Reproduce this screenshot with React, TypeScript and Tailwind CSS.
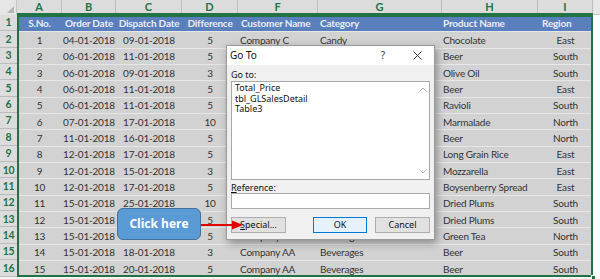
import React from 'react';

type Row = [string, string, string, string, string, string, string, string];

const letters = ['A', 'B', 'C', 'D', 'F', 'G', 'H', 'I'];

const headers: Row = [
  'S.No.',
  'Order Date',
  'Dispatch Date',
  'Difference',
  'Customer Name',
  'Category',
  'Product Name',
  'Region',
];

// cells hidden behind the dialog / callout are left blank
const rows: Row[] = [
  ['1', '04-01-2018', '09-01-2018', '5', 'Company C', 'Candy', 'Chocolate', 'East'],
  ['2', '06-01-2018', '11-01-2018', '5', '', '', 'Beer', 'South'],
  ['3', '06-01-2018', '09-01-2018', '3', '', '', 'Olive Oil', 'South'],
  ['4', '06-01-2018', '11-01-2018', '5', '', '', 'Beer', 'East'],
  ['5', '06-01-2018', '11-01-2018', '5', '', '', 'Ravioli', 'South'],
  ['6', '07-01-2018', '17-01-2018', '10', '', '', 'Marmalade', 'North'],
  ['7', '11-01-2018', '16-01-2018', '5', '', '', 'Beer', 'North'],
  ['8', '12-01-2018', '17-01-2018', '5', '', '', 'Long Grain Rice', 'East'],
  ['9', '12-01-2018', '15-01-2018', '3', '', '', 'Mozzarella', 'East'],
  ['10', '12-01-2018', '17-01-2018', '5', '', '', 'Boysenberry Spread', 'East'],
  ['11', '15-01-2018', '25-01-2018', '10', '', '', 'Dried Plums', 'South'],
  ['12', '15-01-2018', '', '5', '', '', 'Dried Plums', 'South'],
  ['13', '15-01-2018', '', '5', 'Company A', 'Beverages', 'Green Tea', 'North'],
  ['14', '15-01-2018', '18-01-2018', '3', 'Company AA', 'Beverages', 'Beer', 'South'],
  ['15', '15-01-2018', '20-01-2018', '5', 'Company AA', 'Beverages', 'Beer', 'South'],
];

// per-column alignment (data rows / header row)
const dataAlign = [
  'justify-center',
  'justify-center',
  'justify-center',
  'justify-center',
  'justify-start pl-[2px]',
  'justify-start pl-[2px]',
  'justify-start pl-[1px]',
  'justify-center',
];
const headAlign = [
  'justify-center',
  'justify-center',
  'justify-center',
  'justify-center',
  'justify-start pl-[3px]',
  'justify-start pl-[2px]',
  'justify-start pl-[1px]',
  'justify-start pl-[4px]',
];

const gridCols = 'grid grid-cols-[45px_54px_66px_56px_80px_124px_96px_55px]';

function ColumnLetters() {
  return (
    <div className="flex h-[15px] bg-[#e6e6e6]">
      <div className="relative w-[17px] border-r border-[#c8c8c8]">
        <div className="absolute right-[2px] bottom-[2px] w-0 h-0 border-l-[7px] border-l-transparent border-b-[7px] border-b-[#b5b5b5]" />
      </div>
      <div className={`${gridCols} w-[576px] border-b-2 border-[#217346] bg-[#dcdcdc]`}>
        {letters.map((l) => (
          <div
            key={l}
            className="flex items-center justify-center border-r border-[#bcbcbc] text-[11px] font-bold text-[#217346] leading-none"
          >
            {l}
          </div>
        ))}
      </div>
      <div className="flex-1 border-b border-[#c8c8c8]" />
    </div>
  );
}

function RowNumbers() {
  return (
    <div className="flex flex-col w-[17px] bg-[#dcdcdc]">
      {Array.from({ length: 16 }, (_, i) => (
        <div
          key={i}
          className="flex items-center justify-center h-[16.35px] border-b border-[#bcbcbc] text-[10.5px] font-bold text-[#217346] leading-none tracking-[-0.3px]"
        >
          {i + 1}
        </div>
      ))}
    </div>
  );
}

function Sheet() {
  return (
    <div className="relative w-[576px] after:absolute after:inset-0 after:border-2 after:border-[#217346] after:pointer-events-none">
      <div className={`${gridCols} h-[16.35px] bg-[#5a7fbd]`}>
        {headers.map((h, i) => (
          <div
            key={h}
            className={`flex items-center ${headAlign[i]} text-[10px] font-bold text-[#e8edf6] leading-none whitespace-nowrap tracking-[-0.2px]`}
          >
            {h}
          </div>
        ))}
      </div>
      {rows.map((r, ri) => (
        <div key={ri} className={`${gridCols} h-[16.35px] bg-[#d2d2d2] border-t border-[#e6e6e6]`}>
          {r.map((c, ci) => (
            <div
              key={ci}
              className={`flex items-center ${dataAlign[ci]} text-[10px] text-[#333333] leading-none whitespace-nowrap tracking-[-0.2px]`}
            >
              {c}
            </div>
          ))}
        </div>
      ))}
      <div className="absolute -right-[3px] -bottom-[3px] w-[5px] h-[5px] bg-[#217346] border border-white z-10" />
    </div>
  );
}

function Chevron({ up }: { up?: boolean }) {
  return (
    <svg width="8" height="5" viewBox="0 0 8 5" className="text-[#b0b0b0]">
      <path
        d={up ? 'M0.5 4.5 L4 1 L7.5 4.5' : 'M0.5 0.5 L4 4 L7.5 0.5'}
        fill="none"
        stroke="currentColor"
        strokeWidth="1"
      />
    </svg>
  );
}

function GoToDialog() {
  return (
    <div className="absolute left-[226px] top-[45px] w-[209px] h-[195px] flex flex-col border border-[#9a9a9a] bg-[#f0f0f0] shadow-[2px_3px_8px_rgba(0,0,0,0.35)] font-['Noto_Sans',sans-serif] text-[#111] text-[9px]">
      <div className="flex items-center h-[19px] bg-white pl-[3px]">
        <span className="text-[10px]">Go To</span>
        <span className="ml-auto mr-[28px] text-[10px] text-[#333]">?</span>
        <svg width="9" height="9" viewBox="0 0 9 9" className="mr-[12px]">
          <path d="M0.5 0.5 L8.5 8.5 M8.5 0.5 L0.5 8.5" stroke="#333" strokeWidth="1" />
        </svg>
      </div>
      <div className="flex flex-col flex-1 px-[4px]">
        <div className="h-[16px] flex items-end pb-[2px] leading-none">Go to:</div>
        <div className="flex h-[99px] border border-[#a9a9a9] bg-white">
          <div className="flex-1 flex flex-col pl-[3px] pt-[1px] leading-[10.5px]">
            <span>Total_Price</span>
            <span>tbl_GLSalesDetail</span>
            <span>Table3</span>
          </div>
          <div className="w-[13px] flex flex-col items-center justify-between py-[5px]">
            <Chevron up />
            <Chevron />
          </div>
        </div>
        <div className="h-[13px] flex items-end pb-[1px] leading-none">
          <span>
            <span className="underline">R</span>eference:
          </span>
        </div>
        <div className="h-[16px] border border-[#a9a9a9] bg-white" />
        <div className="flex mt-[8px]">
          <div className="w-[55px] h-[16px] flex items-center justify-center border border-[#adadad] bg-[#e1e1e1]">
            <span>
              <span className="underline">S</span>pecial...
            </span>
          </div>
          <div className="ml-auto w-[54px] h-[16px] flex items-center justify-center border border-[#0078d7] bg-[#e5f1fb]">
            OK
          </div>
          <div className="ml-[8px] w-[55px] h-[16px] flex items-center justify-center border border-[#adadad] bg-[#e1e1e1]">
            Cancel
          </div>
        </div>
      </div>
    </div>
  );
}

function Callout() {
  return (
    <>
      <div className="absolute left-[117px] top-[208px] w-[84px] h-[32px] flex items-center justify-center rounded-[6px] bg-[#5b9bd5] border border-[#41719c] text-white font-bold text-[12px] font-['Open_Sans',sans-serif]">
        Click here
      </div>
      <svg className="absolute left-[201px] top-[219px]" width="42" height="12" viewBox="0 0 42 12">
        <line x1="0" y1="6" x2="33" y2="6" stroke="#e00000" strokeWidth="2" />
        <polygon points="31,1.5 42,6 31,10.5" fill="#e00000" />
      </svg>
    </>
  );
}

export default function App() {
  return (
    <div className="relative w-[600px] h-[279px] overflow-hidden bg-[#f4f4f4] font-['Lato',sans-serif]">
      <ColumnLetters />
      <div className="flex">
        <RowNumbers />
        <Sheet />
        <div className="flex-1 bg-white" />
      </div>
      <GoToDialog />
      <Callout />
    </div>
  );
}
